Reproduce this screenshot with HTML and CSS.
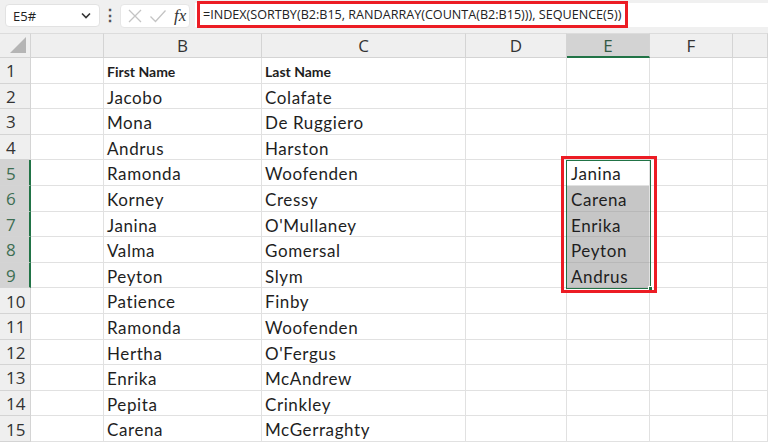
FILE: index.html
```html
<!DOCTYPE html>
<html lang="en">
<head>
<meta charset="utf-8">
<title>Excel</title>
<link rel="stylesheet" href="styles.css">
</head>
<body>
<div class="app">
  <div class="toolbar">
    <div class="namebox">
      <span class="name">E5#</span>
      <svg class="chev" width="10" height="7" viewBox="0 0 10 7"><path d="M1 1.5 L5 5.5 L9 1.5" fill="none" stroke="#333" stroke-width="1.6"/></svg>
    </div>
    <div class="dots">⋮</div>
    <div class="fxbox">
      <svg class="ic" width="16" height="16" viewBox="0 0 16 16"><path d="M2 2 L14 14 M14 2 L2 14" stroke="#c4c4c4" stroke-width="1.3" fill="none"/></svg>
      <svg class="ic" width="18" height="16" viewBox="0 0 18 16"><path d="M1.5 8.5 L6.5 13.5 L16.5 2.5" stroke="#c4c4c4" stroke-width="1.3" fill="none"/></svg>
      <span class="fx">fx</span>
    </div>
    <div class="formula">
      <div class="formula-text">=INDEX(SORTBY(B2:B15, RANDARRAY(COUNTA(B2:B15))), SEQUENCE(5))</div>
    </div>
  </div>
  <div class="sheet">
    <div class="grid">
      <div class="hd corner"><span class="tri"></span></div>
      <div class="hd col"></div>
      <div class="hd col">B</div>
      <div class="hd col">C</div>
      <div class="hd col">D</div>
      <div class="hd col sel">E</div>
      <div class="hd col">F</div>
      <div class="hd col"></div>

      <div class="hd row">1</div><div class="c"></div><div class="c b">First Name</div><div class="c b">Last Name</div><div class="c"></div><div class="c"></div><div class="c"></div><div class="c"></div>
      <div class="hd row">2</div><div class="c"></div><div class="c">Jacobo</div><div class="c">Colafate</div><div class="c"></div><div class="c"></div><div class="c"></div><div class="c"></div>
      <div class="hd row">3</div><div class="c"></div><div class="c">Mona</div><div class="c">De Ruggiero</div><div class="c"></div><div class="c"></div><div class="c"></div><div class="c"></div>
      <div class="hd row">4</div><div class="c"></div><div class="c">Andrus</div><div class="c">Harston</div><div class="c"></div><div class="c"></div><div class="c"></div><div class="c"></div>
      <div class="hd row sel">5</div><div class="c"></div><div class="c">Ramonda</div><div class="c">Woofenden</div><div class="c"></div><div class="c e">Janina</div><div class="c"></div><div class="c"></div>
      <div class="hd row sel">6</div><div class="c"></div><div class="c">Korney</div><div class="c">Cressy</div><div class="c"></div><div class="c e shade">Carena</div><div class="c"></div><div class="c"></div>
      <div class="hd row sel">7</div><div class="c"></div><div class="c">Janina</div><div class="c">O'Mullaney</div><div class="c"></div><div class="c e shade">Enrika</div><div class="c"></div><div class="c"></div>
      <div class="hd row sel">8</div><div class="c"></div><div class="c">Valma</div><div class="c">Gomersal</div><div class="c"></div><div class="c e shade">Peyton</div><div class="c"></div><div class="c"></div>
      <div class="hd row sel">9</div><div class="c"></div><div class="c">Peyton</div><div class="c">Slym</div><div class="c"></div><div class="c e shade">Andrus</div><div class="c"></div><div class="c"></div>
      <div class="hd row">10</div><div class="c"></div><div class="c">Patience</div><div class="c">Finby</div><div class="c"></div><div class="c"></div><div class="c"></div><div class="c"></div>
      <div class="hd row">11</div><div class="c"></div><div class="c">Ramonda</div><div class="c">Woofenden</div><div class="c"></div><div class="c"></div><div class="c"></div><div class="c"></div>
      <div class="hd row">12</div><div class="c"></div><div class="c">Hertha</div><div class="c">O'Fergus</div><div class="c"></div><div class="c"></div><div class="c"></div><div class="c"></div>
      <div class="hd row">13</div><div class="c"></div><div class="c">Enrika</div><div class="c">McAndrew</div><div class="c"></div><div class="c"></div><div class="c"></div><div class="c"></div>
      <div class="hd row">14</div><div class="c"></div><div class="c">Pepita</div><div class="c">Crinkley</div><div class="c"></div><div class="c"></div><div class="c"></div><div class="c"></div>
      <div class="hd row">15</div><div class="c"></div><div class="c">Carena</div><div class="c">McGerraghty</div><div class="c"></div><div class="c"></div><div class="c"></div><div class="c"></div>
    </div>
    <div class="range"><span class="handle"></span></div>
    <div class="highlight"></div>
  </div>
</div>
</body>
</html>
```
FILE: styles.css
```css
* { box-sizing: border-box; }
html, body { margin: 0; padding: 0; }
body {
  width: 768px;
  height: 442px;
  overflow: hidden;
  background: #fff;
  font-family: "Lato", "Open Sans", sans-serif;
  color: #1e1e1e;
}
.app { width: 768px; height: 442px; }

.toolbar {
  height: 33px;
  background: #f0f0f0;
  display: flex;
  align-items: flex-start;
  padding-top: 3px;
}
.namebox {
  margin-left: 5px;
  margin-top: 1px;
  width: 95px;
  height: 23px;
  background: #fff;
  border: 1px solid #e2e2e2;
  border-radius: 4px;
  display: flex;
  align-items: center;
  justify-content: space-between;
  padding: 0 8px 0 7px;
}
.name { font-family: "Open Sans", sans-serif; font-size: 13px; color: #222; }
.dots {
  width: 20px;
  text-align: center;
  font-size: 16px;
  line-height: 24px;
  color: #555;
  font-weight: bold;
}
.fxbox {
  width: 70px;
  height: 24px;
  margin-top: 1px;
  background: #fff;
  border: 1px solid #e6e6e6;
  border-radius: 4px;
  display: flex;
  align-items: center;
  gap: 6px;
  padding-left: 6px;
}
.fx {
  font-family: "Liberation Serif", "DejaVu Serif", serif;
  font-style: italic;
  font-size: 17px;
  color: #333;
  margin-left: 1px;
}
.formula {
  flex: 1;
  margin-left: 5px;
  height: 24px;
  background: #fff;
  position: relative;
}
.formula-text {
  position: absolute;
  left: 2px;
  top: -2px;
  width: 431px;
  height: 27px;
  border: 3px solid #ec1c24;
  font-family: "Open Sans", sans-serif;
  font-size: 12.6px;
  line-height: 21px;
  padding-left: 3px;
  color: #222;
  white-space: nowrap;
}

.sheet { position: relative; }
.grid {
  display: grid;
  grid-template-columns: 31px 73px 158px 204px 101px 83px 83px 35px;
  grid-template-rows: 25px repeat(15, 25.6px);
}
.hd {
  background: #efefef;
  border-right: 1px solid #d4d4d4;
  border-bottom: 1px solid #d4d4d4;
  color: #333;
}
.hd.col {
  display: flex;
  align-items: center;
  justify-content: center;
  font-size: 17px;
  font-family: "Open Sans", sans-serif;
  border-top: 1px solid #dcdcdc;
}
.hd.col.sel {
  background: #d3d3d3;
  border-bottom: 2px solid #217346;
  color: #335a45;
}
.corner { position: relative; border-top: 1px solid #dcdcdc; }
.tri {
  position: absolute;
  right: 4px;
  bottom: 4px;
  width: 0; height: 0;
  border-left: 16px solid transparent;
  border-bottom: 16px solid #b5b5b5;
}
.hd.row {
  display: flex;
  align-items: center;
  padding-left: 6px;
  padding-top: 1px;
  font-size: 17px;
  font-family: "Open Sans", sans-serif;
  color: #333;
}
.hd.row.sel {
  background: #d3d3d3;
  border-right: 2px solid #217346;
  color: #3d6e52;
}
.c {
  border-right: 1px solid #e1e1e1;
  border-bottom: 1px solid #e1e1e1;
  padding: 2px 3px 0 3px;
  font-size: 17px;
  letter-spacing: 0.6px;
  line-height: 24.5px;
  white-space: nowrap;
  overflow: visible;
}
.c.b { font-weight: bold; font-size: 14px; letter-spacing: 0; padding-top: 0; line-height: 27px; }
.c.e { padding-left: 4px; }
.c.shade { background: #c6c6c6; border-bottom-color: #b8b8b8; }

.range {
  position: absolute;
  left: 566px;
  top: 127px;
  width: 85px;
  height: 129px;
  border: 1.5px solid #217346;
  pointer-events: none;
}
.handle {
  position: absolute;
  right: -3px;
  bottom: -3px;
  width: 5px;
  height: 5px;
  background: #217346;
  border: 1px solid #fff;
}
.highlight {
  position: absolute;
  left: 561px;
  top: 123px;
  width: 96px;
  height: 137px;
  border: 3px solid #ec1c24;
  pointer-events: none;
}
```
